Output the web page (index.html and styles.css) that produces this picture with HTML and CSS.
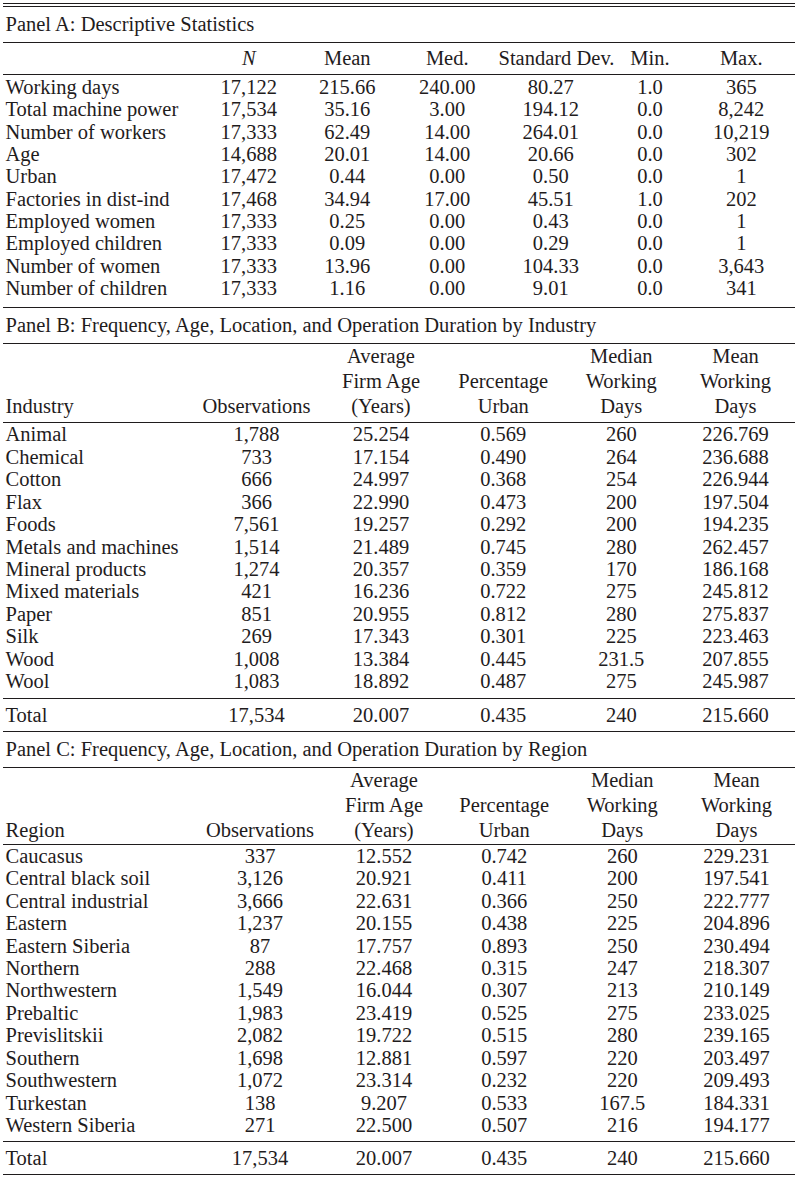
FILE: index.html
```html
<!DOCTYPE html>
<html>
<head>
<meta charset="utf-8">
<link rel="stylesheet" href="styles.css">
</head>
<body>
<div class="page">
  <div class="double-rule"></div>

  <div class="panel-title">Panel A: Descriptive Statistics</div>
  <div class="grid-a head-a">
    <div class="lab"></div><div><i>N</i></div><div>Mean</div><div>Med.</div><div>Standard Dev.</div><div>Min.</div><div>Max.</div>
  </div>
  <div class="grid-a body-a">
    <div class="lab">Working days</div><div>17,122</div><div>215.66</div><div>240.00</div><div>80.27</div><div>1.0</div><div>365</div>
    <div class="lab">Total machine power</div><div>17,534</div><div>35.16</div><div>3.00</div><div>194.12</div><div>0.0</div><div>8,242</div>
    <div class="lab">Number of workers</div><div>17,333</div><div>62.49</div><div>14.00</div><div>264.01</div><div>0.0</div><div>10,219</div>
    <div class="lab">Age</div><div>14,688</div><div>20.01</div><div>14.00</div><div>20.66</div><div>0.0</div><div>302</div>
    <div class="lab">Urban</div><div>17,472</div><div>0.44</div><div>0.00</div><div>0.50</div><div>0.0</div><div>1</div>
    <div class="lab">Factories in dist-ind</div><div>17,468</div><div>34.94</div><div>17.00</div><div>45.51</div><div>1.0</div><div>202</div>
    <div class="lab">Employed women</div><div>17,333</div><div>0.25</div><div>0.00</div><div>0.43</div><div>0.0</div><div>1</div>
    <div class="lab">Employed children</div><div>17,333</div><div>0.09</div><div>0.00</div><div>0.29</div><div>0.0</div><div>1</div>
    <div class="lab">Number of women</div><div>17,333</div><div>13.96</div><div>0.00</div><div>104.33</div><div>0.0</div><div>3,643</div>
    <div class="lab">Number of children</div><div>17,333</div><div>1.16</div><div>0.00</div><div>9.01</div><div>0.0</div><div>341</div>
  </div>

  <div class="panel-title">Panel B: Frequency, Age, Location, and Operation Duration by Industry</div>
  <div class="grid-b head-b">
    <div class="lab">Industry</div><div>Observations</div><div>Average<br>Firm Age<br>(Years)</div><div>Percentage<br>Urban</div><div>Median<br>Working<br>Days</div><div>Mean<br>Working<br>Days</div>
  </div>
  <div class="grid-b body-b">
    <div class="lab">Animal</div><div>1,788</div><div>25.254</div><div>0.569</div><div>260</div><div>226.769</div>
    <div class="lab">Chemical</div><div>733</div><div>17.154</div><div>0.490</div><div>264</div><div>236.688</div>
    <div class="lab">Cotton</div><div>666</div><div>24.997</div><div>0.368</div><div>254</div><div>226.944</div>
    <div class="lab">Flax</div><div>366</div><div>22.990</div><div>0.473</div><div>200</div><div>197.504</div>
    <div class="lab">Foods</div><div>7,561</div><div>19.257</div><div>0.292</div><div>200</div><div>194.235</div>
    <div class="lab">Metals and machines</div><div>1,514</div><div>21.489</div><div>0.745</div><div>280</div><div>262.457</div>
    <div class="lab">Mineral products</div><div>1,274</div><div>20.357</div><div>0.359</div><div>170</div><div>186.168</div>
    <div class="lab">Mixed materials</div><div>421</div><div>16.236</div><div>0.722</div><div>275</div><div>245.812</div>
    <div class="lab">Paper</div><div>851</div><div>20.955</div><div>0.812</div><div>280</div><div>275.837</div>
    <div class="lab">Silk</div><div>269</div><div>17.343</div><div>0.301</div><div>225</div><div>223.463</div>
    <div class="lab">Wood</div><div>1,008</div><div>13.384</div><div>0.445</div><div>231.5</div><div>207.855</div>
    <div class="lab">Wool</div><div>1,083</div><div>18.892</div><div>0.487</div><div>275</div><div>245.987</div>
  </div>
  <div class="grid-b total">
    <div class="lab">Total</div><div>17,534</div><div>20.007</div><div>0.435</div><div>240</div><div>215.660</div>
  </div>

  <div class="panel-title">Panel C: Frequency, Age, Location, and Operation Duration by Region</div>
  <div class="grid-c head-c">
    <div class="lab">Region</div><div>Observations</div><div>Average<br>Firm Age<br>(Years)</div><div>Percentage<br>Urban</div><div>Median<br>Working<br>Days</div><div>Mean<br>Working<br>Days</div>
  </div>
  <div class="grid-c body-c">
    <div class="lab">Caucasus</div><div>337</div><div>12.552</div><div>0.742</div><div>260</div><div>229.231</div>
    <div class="lab">Central black soil</div><div>3,126</div><div>20.921</div><div>0.411</div><div>200</div><div>197.541</div>
    <div class="lab">Central industrial</div><div>3,666</div><div>22.631</div><div>0.366</div><div>250</div><div>222.777</div>
    <div class="lab">Eastern</div><div>1,237</div><div>20.155</div><div>0.438</div><div>225</div><div>204.896</div>
    <div class="lab">Eastern Siberia</div><div>87</div><div>17.757</div><div>0.893</div><div>250</div><div>230.494</div>
    <div class="lab">Northern</div><div>288</div><div>22.468</div><div>0.315</div><div>247</div><div>218.307</div>
    <div class="lab">Northwestern</div><div>1,549</div><div>16.044</div><div>0.307</div><div>213</div><div>210.149</div>
    <div class="lab">Prebaltic</div><div>1,983</div><div>23.419</div><div>0.525</div><div>275</div><div>233.025</div>
    <div class="lab">Previslitskii</div><div>2,082</div><div>19.722</div><div>0.515</div><div>280</div><div>239.165</div>
    <div class="lab">Southern</div><div>1,698</div><div>12.881</div><div>0.597</div><div>220</div><div>203.497</div>
    <div class="lab">Southwestern</div><div>1,072</div><div>23.314</div><div>0.232</div><div>220</div><div>209.493</div>
    <div class="lab">Turkestan</div><div>138</div><div>9.207</div><div>0.533</div><div>167.5</div><div>184.331</div>
    <div class="lab">Western Siberia</div><div>271</div><div>22.500</div><div>0.507</div><div>216</div><div>194.177</div>
  </div>
  <div class="grid-c total">
    <div class="lab">Total</div><div>17,534</div><div>20.007</div><div>0.435</div><div>240</div><div>215.660</div>
  </div>
</div>
</body>
</html>
```

FILE: styles.css
```css
html, body {
  margin: 0;
  padding: 0;
  background: #ffffff;
}

.page {
  padding-left: 3px;
  padding-top: 3px;
  font-family: "Liberation Serif", "Times New Roman", serif;
  font-size: 20.5px;
  color: #1f1c1d;
}

.double-rule {
  height: 2px;
  border-top: 1px solid #1f1c1d;
  border-bottom: 1px solid #1f1c1d;
}

.panel-title {
  height: 35px;
  line-height: 35px;
  padding-left: 2.5px;
  border-bottom: 1px solid #1f1c1d;
  white-space: nowrap;
}

.grid-a {
  display: grid;
  grid-template-columns: 196px 99.5px 97.5px 102.5px 104.5px 94px 88.5px;
}

.grid-b {
  display: grid;
  grid-template-columns: 191px 125px 124px 120.5px 115.5px 113px;
}

.grid-c {
  display: grid;
  grid-template-columns: 193px 128px 120px 120.5px 115.5px 113px;
}

.grid-a > div,
.grid-b > div,
.grid-c > div {
  text-align: center;
  white-space: nowrap;
}

.grid-a > .lab,
.grid-b > .lab,
.grid-c > .lab {
  text-align: left;
  padding-left: 2.5px;
}

.head-a {
  height: 31px;
  line-height: 31px;
  border-bottom: 1px solid #1f1c1d;
}

.body-a {
  padding-top: 1px;
  padding-bottom: 7.7px;
  border-bottom: 1px solid #1f1c1d;
  line-height: 22.33px;
}

.head-b,
.head-c {
  line-height: 25px;
  align-items: end;
  border-bottom: 1px solid #1f1c1d;
}

.head-b {
  padding-top: 0.5px;
  padding-bottom: 3px;
}

.head-c {
  padding-top: 0.5px;
  padding-bottom: 1px;
}

.body-b,
.body-c {
  line-height: 22.4px;
  border-bottom: 1px solid #1f1c1d;
}

.body-b {
  padding-bottom: 5.2px;
}

.body-c {
  padding-bottom: 4.8px;
}

.total {
  height: 32px;
  line-height: 32px;
  border-bottom: 1px solid #1f1c1d;
}
```
